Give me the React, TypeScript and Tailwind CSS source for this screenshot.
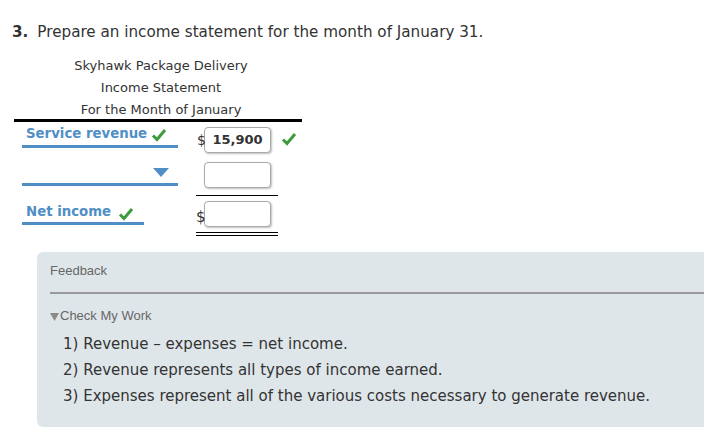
import React from "react";

const Check = ({ className = "" }: { className?: string }) => (
  <svg viewBox="0 0 16 16" className={className} width="16" height="16">
    <path d="M2 8.5 L6 12.5 L14 3" fill="none" stroke="#3d9a3d" strokeWidth="3" strokeLinecap="butt" />
  </svg>
);

const Box = () => (
  <div className="ml-[8px] w-[67px] h-[26px] border border-[#aaa] rounded-[4px] bg-white shadow-[1px_1px_2px_rgba(0,0,0,0.25)]"></div>
);

export default function App() {
  return (
    <div className="w-[704px] h-[433px] bg-white overflow-hidden" style={{ fontFamily: '"DejaVu Sans", Verdana, sans-serif' }}>
      <div className="pl-[12px] pt-[22px] text-[15.2px] leading-[20px] text-[#333]">
        <span className="font-bold mr-[9px]">3.</span>Prepare an income statement for the month of January 31.
      </div>

      <div className="ml-[14px] mt-[13px] w-[288px]">
        <div className="text-center text-[13px] leading-[22px] text-[#333] h-[64px] pl-[6px]">
          <div>Skyhawk Package Delivery</div>
          <div>Income Statement</div>
          <div>For the Month of January</div>
        </div>
        <div className="h-[3px] bg-black"></div>

        {/* Row 1 */}
        <div className="flex items-start h-[40px]">
          <div className="ml-[8px] w-[156px] h-[26px] border-b-[3px] border-[#4f8fc6] flex items-center">
            <span className="ml-[4px] text-[13.3px] font-bold text-[#4f8fc6] leading-[18px]">Service revenue</span>
            <Check className="ml-[4px] mt-[2px]" />
          </div>
          <div className="ml-[18px] w-[82px] mt-[5px] relative">
            <span className="absolute left-[1px] top-[3px] text-[14px] text-[#333]">$</span>
            <div className="ml-[8px] w-[67px] h-[26px] border border-[#aaa] rounded-[4px] bg-white shadow-[1px_1px_2px_rgba(0,0,0,0.25)] flex items-center justify-center text-[13px] font-bold text-[#333]">15,900</div>
          </div>
          <Check className="mt-[9px] ml-[3px]" />
        </div>

        {/* Row 2 */}
        <div className="flex items-start h-[39px]">
          <div className="ml-[8px] w-[156px] h-[24px] border-b-[3px] border-[#4f8fc6] relative">
            <svg className="absolute right-[9px] top-[6px]" width="16" height="9" viewBox="0 0 16 9">
              <path d="M0 0 L16 0 L8 9 Z" fill="#4f8fc6" />
            </svg>
          </div>
          <div className="ml-[18px] w-[82px] flex flex-col">
            <Box />
            <div className="mt-[7px] h-[1px] bg-black"></div>
          </div>
        </div>

        {/* Row 3 */}
        <div className="flex items-start h-[39px]">
          <div className="ml-[8px] w-[122px] h-[24px] border-b-[3px] border-[#4f8fc6] flex items-center">
            <span className="ml-[4px] text-[13.3px] font-bold text-[#4f8fc6] leading-[18px]">Net income</span>
            <Check className="ml-[7px] mt-[4px]" />
          </div>
          <div className="ml-[52px] w-[82px] flex flex-col relative">
            <span className="absolute left-[0px] top-[5px] text-[15px] text-[#333]">$</span>
            <Box />
            <div className="mt-[5px] h-[1px] bg-black"></div>
            <div className="mt-[2px] h-[1px] bg-black"></div>
          </div>
        </div>
      </div>

      <div className="ml-[37px] mt-[12px] w-[700px] h-[175px] bg-[#dfe6ea] rounded-[6px]" style={{ fontFamily: '"Liberation Sans", Arial, sans-serif' }}>
        <div className="pl-[13px] pt-[11px] text-[13px] leading-[16px] text-[#666]">Feedback</div>
        <div className="ml-[13px] mt-[13px] h-[2px] bg-[#999]"></div>
        <div className="pl-[13px] pt-[14px] text-[13px] leading-[16px] text-[#666] flex items-center">
          <svg width="9" height="9" viewBox="0 0 9 9" className="mr-[1px]">
            <path d="M0 1 L9 1 L4.5 9 Z" fill="#8a8a8a" />
          </svg>
          Check My Work
        </div>
        <div className="pl-[26px] pt-[7px] text-[15px] leading-[26px] text-[#333]" style={{ fontFamily: '"DejaVu Sans", Tahoma, sans-serif' }}>
          <div>1) Revenue – expenses = net income.</div>
          <div>2) Revenue represents all types of income earned.</div>
          <div>3) Expenses represent all of the various costs necessary to generate revenue.</div>
        </div>
      </div>
    </div>
  );
}
